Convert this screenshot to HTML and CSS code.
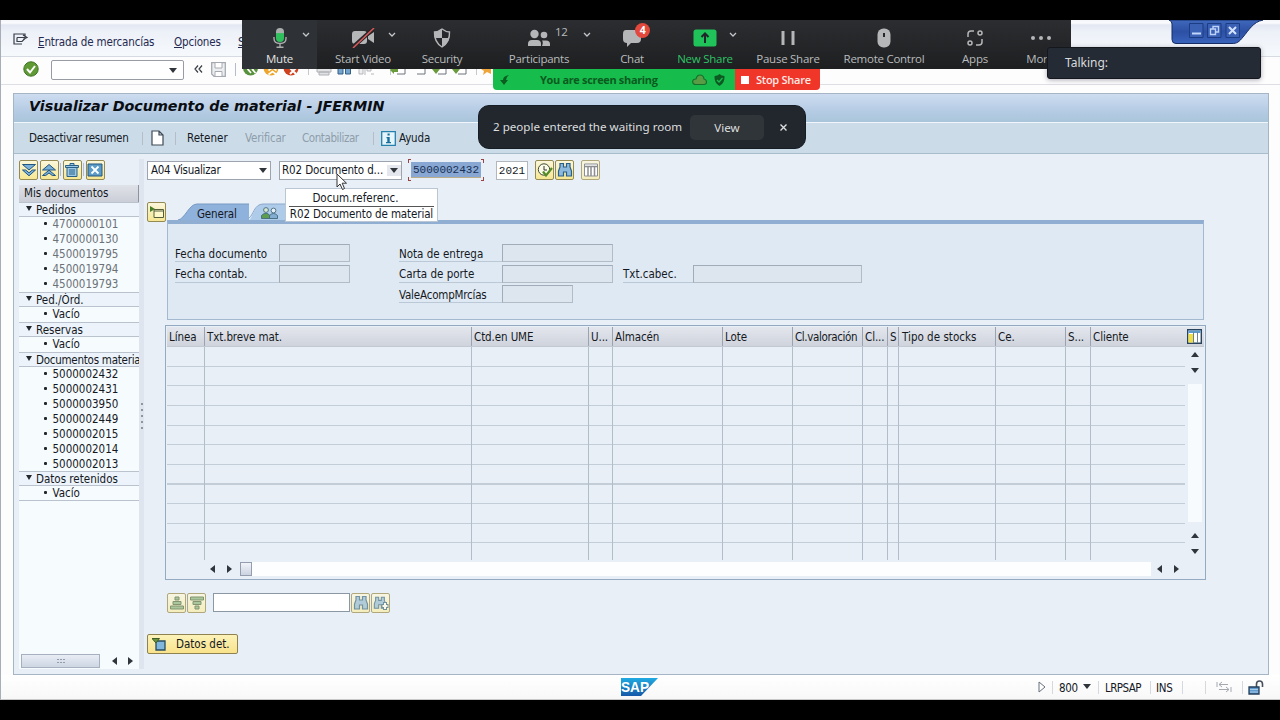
FILE: index.html
```html
<!DOCTYPE html>
<html lang="es">
<head>
<meta charset="utf-8">
<title>Visualizar Documento de material</title>
<link rel="stylesheet" href="styles.css">
</head>
<body>
<svg width="0" height="0" class="defs">
  <symbol id="bino" viewBox="0 0 16 16"><path d="M3 1.500h3.500V5h3V1.500H13V5l1.500 4v5H9.500v-4h-3v4h-5V9L3 5z" fill="#8db9dd" stroke="#2b5f86" stroke-width="1.200"/></symbol>
  <symbol id="chev" viewBox="0 0 8 5"><path d="M1 1l3 3 3-3" fill="none" stroke="#c4c6c8" stroke-width="1.300"/></symbol>
</svg>
<div class="window">
  <div class="menubar">
    <svg class="sysicon" width="16" height="12" viewBox="0 0 16 12"><path d="M12 3V1H1v10h8M4 4.500h8M4 4.500v4h5l4-4 M10 2l4 2.500-4 2" fill="none" stroke="#38404a" stroke-width="1.200"/></svg>
    <span class="menu m1"><u>E</u>ntrada de mercancías</span>
    <span class="menu m2"><u>O</u>pciones</span>
    <span class="menu"><u>S</u>istema</span>
  </div>
  <div class="toolbar">
    <svg class="ok" width="16" height="16" viewBox="0 0 16 16"><circle cx="8" cy="8" r="7.200" fill="#5f9a35" stroke="#3f7424"/><path d="M4 8l3 3.500L12 5" fill="none" stroke="#fff" stroke-width="2"/></svg>
    <div class="command"><i class="tri-d"></i></div>
    <svg class="laquo" width="9" height="8" viewBox="0 0 9 8"><path d="M4 .5L1 4l3 3.500M8 .5L5 4l3 3.500" fill="none" stroke="#3a3f45" stroke-width="1.200"/></svg>
    <svg width="15" height="15" viewBox="0 0 15 15"><path d="M.7.7h13.600v13.600H3L.7 12z" fill="#eceef0" stroke="#a6aab0" stroke-width="1.300"/><path d="M4 1v5h7V1M4 14V9.500h7V14" fill="#fff" stroke="#a6aab0"/></svg>
    <i class="sep s1"></i>
    <svg class="nav" width="260" height="16" viewBox="0 0 260 16">
      <circle cx="7.500" cy="7" r="7.500" fill="#58913b"/><path d="M8 5L5 8.500 8 12M12.500 5l-3 3.500 3 3.500" fill="none" stroke="#fff" stroke-width="1.700"/>
      <circle cx="28" cy="7" r="7.500" fill="#eda52c"/><path d="M25.500 9.500l4-3 4 3M25.500 13.500l4-3 4 3" fill="none" stroke="#fff" stroke-width="1.600"/>
      <circle cx="48" cy="7" r="7.500" fill="#cf421f"/><path d="M47 7l6 6M53 7l-6 6" stroke="#fff" stroke-width="2"/>
      <path d="M65.500 1v13" stroke="#c6c9cd"/>
      <path d="M74 6h14v5H74zM76 11h10v3H76z" fill="#dfe1e3" stroke="#aeb1b5"/>
      <path d="M95 2h5v11h-5zM102.500 2h5v11h-5zM100 6h3" fill="#74a5ce" stroke="#365f85"/>
      <path d="M116 2h4v11h-4zM124 2h4v8h-4zM122 8v6M128 13h3" fill="#eee" stroke="#b4b7bb"/>
      <path d="M147.500 1v13" stroke="#c6c9cd"/>
      <path d="M153 2h9v11h-8M173 2h9v11h-8M194 2h9v11h-8M214 2h9v11h-8" fill="#fff" stroke="#6d737a"/>
      <path d="M147 9l4-4v2h4v4h-4v2zM169 5h5v3h-5zM189 8h2V3h4v5h2l-4 5zM209 8h2V3h4v5h2l-4 5z" fill="#699b3d"/>
      <path d="M233.500 1v13" stroke="#c6c9cd"/>
      <path d="M240 4l2 2 3-3v4h3v6l-4-2-4 3 1-4-3-2h3z" fill="#f0a53a"/>
    </svg>
  </div>
  <div class="sheet">
    <h1 class="title">Visualizar Documento de material - JFERMIN</h1>
    <div class="appbar">
      <span class="a1">Desactivar resumen</span><i class="sep"></i>
      <svg class="page" width="13" height="16" viewBox="0 0 13 16"><path d="M1 1h7l4 4v10H1zM8 1v4h4" fill="#fff" stroke="#3e4a55" stroke-width="1.200"/></svg><i class="sep"></i>
      <span class="a2">Retener</span><span class="a3 off">Verificar</span><span class="a4 off">Contabilizar</span><i class="sep"></i>
      <svg class="info" width="15" height="15" viewBox="0 0 15 15"><path d="M.7.7h13.600v13.600H.7z" fill="#e6f5fb" stroke="#2581ac" stroke-width="1.300"/><path d="M6.500 2.500h2.200v2H6.500zM5.500 6h3.200v5H10v1.300H5V11h1.300V7.300h-.8z" fill="#176f9c"/></svg>
      <span class="a5">Ayuda</span>
    </div>
    <div class="content">
      <aside class="side">
        <div class="sidebtns">
          <b class="ybtn"><svg viewBox="0 0 16 16"><path d="M1.500 2.500h13L8 8zM1.500 8h3.200L8 10.800 11.300 8h3.200L8 13.800z" fill="#78b0da" stroke="#23567e"/></svg></b>
          <b class="ybtn"><svg viewBox="0 0 16 16"><path d="M1.500 8L8 2.500 14.500 8zM1.500 13.500L8 8.200l6.500 5.300h-3.200L8 11l-3.300 2.500z" fill="#78b0da" stroke="#23567e"/></svg></b>
          <i class="sep"></i>
          <b class="ybtn"><svg viewBox="0 0 16 16"><path d="M1.500 3.500h13v2h-13zM6 3V1.500h4V3M3 5.500h10v9H3zM6 7v6M8 7v6M10 7v6" fill="#9cc8e6" stroke="#286089"/></svg></b>
          <i class="sep"></i>
          <b class="ybtn"><svg viewBox="0 0 16 16"><path d="M1 2h14v12H1z" fill="#5d9cc9" stroke="#23567e"/><path d="M4.500 4.500l7 7M11.500 4.500l-7 7" stroke="#fff" stroke-width="1.800"/></svg></b>
        </div>
        <div class="treehead">Mis documentos</div>
        <div class="tree">
          <div class="node">Pedidos</div>
          <div class="leaf off2">4700000101</div><div class="leaf off2">4700000130</div><div class="leaf off2">4500019795</div><div class="leaf off2">4500019794</div><div class="leaf off2">4500019793</div>
          <div class="node">Ped./Órd.</div>
          <div class="leaf">Vacío</div>
          <div class="node">Reservas</div>
          <div class="leaf">Vacío</div>
          <div class="node tight">Documentos materia</div>
          <div class="leaf">5000002432</div><div class="leaf">5000002431</div><div class="leaf">5000003950</div><div class="leaf">5000002449</div><div class="leaf">5000002015</div><div class="leaf">5000002014</div><div class="leaf">5000002013</div>
          <div class="node">Datos retenidos</div>
          <div class="leaf last">Vacío</div>
        </div>
        <div class="sidescroll"><span class="thumb"><i></i><i></i><i></i><i></i><i></i><i></i></span><i class="tri-l"></i><i class="tri-r"></i></div>
      </aside>
      <div class="splitter"><i></i><i></i><i></i><i></i><i></i></div>
      <main class="main">
        <div class="query">
          <div class="combo">A04 Visualizar<i class="tri-d"></i></div>
          <div class="combo c2">R02 Documento d...<i class="tri-d"></i></div>
          <div class="focus"><span>5000002432</span></div>
          <div class="year">2021</div>
          <b class="ybtn"><svg viewBox="0 0 16 16"><circle cx="7" cy="7.500" r="5.700" fill="#fbfbe8" stroke="#3d4b34"/><path d="M7 4v4h3" fill="none" stroke="#333"/><path d="M6 9.500l3 4L15 6" fill="none" stroke="#568c28" stroke-width="2.200"/></svg></b>
          <b class="ybtn"><svg><use href="#bino"/></svg></b>
          <b class="ybtn dim cols"><svg viewBox="0 0 16 16"><path d="M1.500 2h13v12h-13z" fill="#fff" stroke="#8b8d90"/><path d="M1.500 4.500h13M5 4.500V14M8 4.500V14M11.500 4.500V14" fill="none" stroke="#8b8d90" stroke-width="1.500"/></svg></b>
        </div>
        <div class="tabs">
          <b class="ybtn"><svg viewBox="0 0 16 16"><path d="M5 5.500h9.500v8H5z" fill="#fff8c8" stroke="#555e3c"/><path d="M5 7h9" stroke="#555e3c"/><path d="M1 2l5 3-5 3z" fill="#477e28"/></svg></b>
          <svg class="tabshape" width="120" height="17" viewBox="0 0 120 17">
            <path d="M0 17C7 16 11 1 19 1h52v16z" fill="#8fb2dc"/><path d="M0 17C7 16 11 1 19 1h52" fill="none" stroke="#7899c2"/>
            <path d="M71 17C75 15 76 1 85 1h35v16z" fill="#afcbea"/><path d="M71 15C75 13 76 1 85 1h35" fill="none" stroke="#8ba9cc"/>
            <g stroke="#436a7b" stroke-width=".9"><circle cx="88" cy="7" r="2.400" fill="#d8e9d0"/><path d="M83.500 15.500v-3q4.500-4.500 8.500 0v3z" fill="#5d9e4e"/><circle cx="95.500" cy="7.500" r="2.400" fill="#e5edf5"/><path d="M91.500 15.500v-3q4-4 8 0v3z" fill="#83add2"/></g>
          </svg>
          <span class="tabname">General</span>
        </div>
        <section class="form">
          <label>Fecha documento</label><span class="fld"></span><label class="g2">Nota de entrega</label><span class="fld w2"></span><em></em><em></em>
          <label>Fecha contab.</label><span class="fld"></span><label class="g2">Carta de porte</label><span class="fld w2"></span><label class="g3">Txt.cabec.</label><span class="fld"></span>
          <em></em><em></em><label class="g2 vale">ValeAcompMrcías</label><span class="fld w3"></span>
        </section>
        <section class="grid">
          <div class="cols-row head"><span>Línea</span><span>Txt.breve mat.</span><span>Ctd.en UME</span><span>U...</span><span>Almacén</span><span>Lote</span><span class="tight">Cl.valoración</span><span>Cl...</span><span>S</span><span class="wide">Tipo de stocks</span><span>Ce.</span><span>S...</span><span>Cliente</span>
            <svg width="15" height="15" viewBox="0 0 15 15"><path d="M.7.7h13.600v13.600H.7z" fill="#fff" stroke="#28435e" stroke-width="1.400"/><path d="M1.500 1.500h12v2.500h-12z" fill="#5b9ccd"/><path d="M1.500 5h4.500v8.500H1.500z" fill="#f0de45"/><path d="M6.500 3v11M10.500 3v11" stroke="#6d8294"/></svg>
          </div>
          <div class="body">
            <div class="cols-row cells"><i></i><i></i><i></i><i></i><i></i><i></i><i></i><i></i><i></i><i></i><i></i><i></i><i></i></div>
            <div class="vscroll"><i class="tri-u"></i><i class="tri-d"></i><b></b><i class="tri-u"></i><i class="tri-d"></i></div>
          </div>
          <div class="hscroll"><i class="tri-l"></i><i class="tri-r"></i><b></b><s></s><i class="tri-l"></i><i class="tri-r"></i></div>
        </section>
        <div class="find">
          <b class="ybtn dim"><svg viewBox="0 0 16 16"><path d="M6 2h4v3H6zM4 6.500h8v3H4zM1.500 11h13v3h-13z" fill="#a9c79a" stroke="#839572"/></svg></b>
          <b class="ybtn dim"><svg viewBox="0 0 16 16"><path d="M1.500 2h13v3h-13zM4 6.500h8v3H4zM6 11h4v3H6z" fill="#a9c79a" stroke="#839572"/></svg></b>
          <span class="search"></span>
          <b class="ybtn dim"><svg opacity=".65"><use href="#bino"/></svg></b>
          <b class="ybtn dim"><svg opacity=".65" viewBox="0 0 16 16"><use href="#bino" width="14" height="16"/><path d="M12 7v8M8.500 11h7" stroke="#2b5f86" stroke-width="4"/><path d="M12 8v6M9.500 11h5" stroke="#fff" stroke-width="2"/></svg></b>
        </div>
        <div class="detail"><svg width="14" height="13" viewBox="0 0 14 13"><path d="M4 3h9v9H4z" fill="#81b7dc" stroke="#294c60" stroke-width="1.300"/><path d="M0 .5h7.500L4 5z" fill="#68953c" stroke="#3f5c29"/></svg>Datos det.</div>
      </main>
    </div>
  </div>
  <footer class="status">
    <svg class="sap" width="38" height="18" viewBox="0 0 38 18"><defs><linearGradient id="sg" x2="0" y2="1"><stop stop-color="#20abe2"/><stop offset="1" stop-color="#1559a8"/></linearGradient></defs><path d="M0 0h37L20 18H0z" fill="url(#sg)"/><text x="0" y="14" class="saptext" textLength="28" lengthAdjust="spacingAndGlyphs">SAP</text></svg>
    <svg class="play" width="8" height="12" viewBox="0 0 8 12"><path d="M1 1v10l6-5z" fill="#fff" stroke="#66707c"/></svg>
    <i class="sep"></i><span class="st1">800<i class="tri-d"></i></span><i class="sep"></i><span class="st2">LRPSAP</span><i class="sep"></i><span class="st3">INS</span><i class="sep"></i><i class="sep e"></i>
    <svg class="tr" width="16" height="12" viewBox="0 0 16 12"><path d="M1 1v5M3 3.500h9M6 1L3 3.500 6 6M15 6v5M3 8.500h10M10 6l3 2.500-3 2.500" fill="none" stroke="#a4a9af"/></svg><i class="sep"></i>
    <svg class="lock" width="16" height="15" viewBox="0 0 16 15"><path d="M8.500 7V4q0-3 3-3t3 3v3" fill="none" stroke="#47505a" stroke-width="1.600"/><path d="M1 7h10v7H1z" fill="#5f9ace" stroke="#243f5b" stroke-width="1.300"/><path d="M2 9.500h8M2 12h8" stroke="#a7cbe9"/></svg>
  </footer>
</div>

<div class="popup"><div>Docum.referenc.</div><div>R02 Documento de material</div></div>
<svg class="cursor" width="12" height="18" viewBox="0 0 12 18"><path d="M1 1v13l3-3 2.500 5.500 2-1L6.200 10.200H10.500z" fill="#fff" stroke="#333"/></svg>

<svg class="winctl" width="96" height="25" viewBox="0 0 96 25"><defs><linearGradient id="wg" x2="0" y2="1"><stop stop-color="#3f68bb"/><stop offset=".5" stop-color="#2c50a4"/><stop offset="1" stop-color="#3a64bd"/></linearGradient></defs><path d="M2 0h94c-10 2-14 10-20 17-4 5-6 6.500-11 6.500H9q-4 0-4-4V4q0-3-3-4z" fill="url(#wg)" stroke="#152c66"/><path d="M22.500 3.500h13.500v14H22.500zM40.500 3.500h13.500v14H40.500zM59 3.500h13.500v14H59z" fill="#3b61b4" stroke="#1c3c83"/><path d="M25 13.500h9" stroke="#c3d6fb" stroke-width="2"/><path d="M43.500 9h5v5.500h-5zM46 8.500V6.500h5.500v5.500h-2.500" fill="none" stroke="#bdd1f8" stroke-width="1.400"/><path d="M62 7l7 7M69 7l-7 7" stroke="#d5e2fd" stroke-width="2"/></svg>

<div class="zoombar">
  <div class="z mute"><svg width="16" height="20" viewBox="0 0 16 20"><defs><linearGradient id="mg" x2="0" y2="1"><stop offset=".35" stop-color="#a9adab"/><stop offset=".4" stop-color="#2fbf5c"/></linearGradient></defs><rect x="4" y="0" width="8" height="14" rx="4" fill="url(#mg)"/><path d="M2 9v1.500q0 5 6 5t6-5V9M8 15.500v4M4.500 19.300h7" fill="none" stroke="#a9adab" stroke-width="1.400"/></svg><span>Mute</span><svg class="chev"><use href="#chev"/></svg></div>
  <div class="z video"><svg width="24" height="20" viewBox="0 0 24 20"><path d="M1 6q0-3 3-3h9q3 0 3 3v7q0 3-3 3H4q-3 0-3-3zM17 8l6-4v11l-6-4z" fill="#b4b6b7"/><path d="M2 19L22 1" stroke="#242628" stroke-width="4"/><path d="M2 20L23 0" stroke="#d9585b" stroke-width="1.500"/></svg><span>Start Video</span><svg class="chev"><use href="#chev"/></svg></div>
  <div class="z sec"><svg width="18" height="20" viewBox="0 0 18 20"><path d="M9 1q4 3 7.500 3Q17 14 9 19 1 14 1.500 4 5 4 9 1z" fill="none" stroke="#b4b6b7" stroke-width="1.400"/><path d="M9 1v9h7q-1 6-7 9v-9H2Q1 7 1.500 4 5 4 9 1z" fill="#b4b6b7"/></svg><span>Security</span></div>
  <div class="z part"><svg width="24" height="20" viewBox="0 0 24 20"><g fill="#b4b6b7"><circle cx="7.500" cy="6" r="4.200"/><path d="M1 18v-2q0-4 4-4h5q4 0 4 4v2z"/><circle cx="17" cy="7" r="3.300"/><path d="M15 18h8v-2q0-3.500-4-3.500h-4q1.500 2 0 5.500z"/></g></svg><span>Participants</span><small>12</small><svg class="chev"><use href="#chev"/></svg></div>
  <div class="z chat"><svg width="20" height="20" viewBox="0 0 20 20"><path d="M4 2h11q4 0 4 4v5q0 4-4 4H9l-4 4v-4q-4 0-4-4V6q0-4 3-4z" fill="#b4b6b7"/></svg><span>Chat</span><b class="badge">4</b></div>
  <div class="z share"><svg width="24" height="20" viewBox="0 0 24 20"><rect x=".5" y="1.500" width="23" height="17" rx="2.500" fill="#1fc35a"/><path d="M12 15V6M8.500 9L12 5.500 15.500 9" fill="none" stroke="#20262a" stroke-width="2"/></svg><span>New Share</span><svg class="chev"><use href="#chev"/></svg></div>
  <div class="z pause"><svg width="14" height="20" viewBox="0 0 14 20"><path d="M2 3v14M12 3v14" stroke="#b4b6b7" stroke-width="3"/></svg><span>Pause Share</span></div>
  <div class="z remote"><svg width="14" height="20" viewBox="0 0 14 20"><rect x=".5" y=".5" width="13" height="19" rx="6" fill="#b4b6b7"/><path d="M7 5v4" stroke="#242628" stroke-width="2"/></svg><span>Remote Control</span></div>
  <div class="z apps"><svg width="18" height="18" viewBox="0 0 18 18"><g fill="none" stroke="#b4b6b7" stroke-width="1.500"><path d="M2 8V5q0-3 3-3h3M16 10v3q0 3-3 3h-3"/><circle cx="14" cy="4" r="2"/><circle cx="4" cy="14" r="2"/></g></svg><span>Apps</span></div>
  <div class="z more"><svg width="22" height="20" viewBox="0 0 22 20"><g fill="#b4b6b7"><circle cx="4" cy="10" r="2"/><circle cx="12" cy="10" r="2"/><circle cx="20" cy="10" r="2"/></g></svg><span>More</span></div>
</div>
<div class="sharing"><div class="green"><svg width="9" height="10" viewBox="0 0 9 10"><path d="M9 0Q3 1 3 5H0l4 5 4-5H6q0-3 3-5z" fill="#0b5d20"/></svg><span>You are screen sharing</span><svg width="15" height="12" viewBox="0 0 15 12"><path d="M4 10.500q-3.300 0-3.300-2.800T4 5q1-4 4-4 3.500 0 4 4 2.500.5 2.500 3T12 10.500z" fill="#5a9c45" stroke="#14702b" stroke-width="1.200"/></svg><svg class="shield" width="11" height="12" viewBox="0 0 11 12"><path d="M5.500 0q2 2 5 2 .5 7-5 10-5.500-3-5-10 3 0 5-2z" fill="#0c5a22"/><path d="M3 6l2 2 3.500-4" fill="none" stroke="#18bd4e" stroke-width="1.200"/></svg></div><div class="red"><i></i><span>Stop Share</span></div></div>
<div class="toast"><span class="msg">2 people entered the waiting room</span><span class="view">View</span><svg width="9" height="9" viewBox="0 0 9 9"><path d="M1.500 1.500l6 6M7.500 1.500l-6 6" stroke="#dcdedf" stroke-width="1.400"/></svg></div>
<div class="talking">Talking:</div>
</body>
</html>
```
FILE: styles.css
```css
* { box-sizing: border-box; }
body { margin: 0; width: 1280px; height: 720px; background: #000; padding: 20px 0; overflow: hidden; position: relative; font: 11.5px/15px "DejaVu Sans Condensed", "DejaVu Sans", sans-serif; font-stretch: condensed; color: #15191f; white-space: nowrap; }
svg { display: block; flex: none; }
i, em, s { font-style: normal; text-decoration: none; flex: none; }
.defs { position: absolute; }
.window { height: 680px; background: #fdfdfe; border-left: 1px solid #a9adb8; border-bottom: 1px solid #c8c8c8; display: flex; flex-direction: column; overflow: hidden; }
.menubar { height: 37px; flex: none; display: flex; align-items: center; padding: 8px 0 0 12px; background: linear-gradient(#f4f5fa 0, #fafbfd 3px, #e3e7f2 5px, #edf1f8 12px, #f6f9fc 36px); border-bottom: 1px solid #d6dae2; color: #252a50; }
.sysicon { margin: -7px 9px 0 0; }
.menu { font-size: 11.5px; }
.m1 { width: 136px; letter-spacing: -.15px; }
.m2 { width: 64px; letter-spacing: -.15px; }
.toolbar { height: 28px; flex: none; display: flex; align-items: center; padding: 0 0 3px 22px; border-bottom: 1px solid #dddfe5; }
.command { width: 133px; height: 20px; margin: 1px 10px 0 12px; border: 1px solid #989ba3; border-radius: 2px; background: #fff; padding: 7px 6px; display: flex; justify-content: flex-end; }
.tri-d, .tri-u { width: 0; height: 0; border: 4px solid transparent; border-top: 5px solid #30353b; border-bottom: 0; }
.tri-u { border-top: 0; border-bottom: 5px solid #30353b; }
.tri-l, .tri-r { width: 0; height: 0; border: 4px solid transparent; border-right: 5px solid #30353b; border-left: 0; }
.tri-r { border-right: 0; border-left: 5px solid #30353b; }
.laquo { margin-right: 8px; }
.sep { width: 1px; height: 13px; background: #b5bdc8; display: block; }
.s1 { margin: 0 7px 0 9px; }
.sheet { margin: 8px 11px 0 12px; height: 582px; flex: none; border: 1px solid #a6b5c6; background: #e8eff7; display: flex; flex-direction: column; overflow: hidden; }
.title { margin: 0; height: 29px; flex: none; padding: 4px 0 0 15px; background: linear-gradient(#cddcf0, #b5cce4 60%, #a9c5da); border-bottom: 1px solid #f0f6fb; color: #0a0d12; font: italic bold 14.3px/16px "DejaVu Sans", sans-serif; font-stretch: normal; letter-spacing: -.02px; }
.appbar { height: 31px; flex: none; display: flex; align-items: center; background: #cbdce8; border-bottom: 1px solid #a9bccb; padding-left: 15px; }
.a1 { width: 113px; letter-spacing: -.25px; } .page { margin: 0 11px 0 8px; } .a2 { width: 58px; margin-left: 11px; } .a3 { width: 57px; letter-spacing: -.2px; } .a4 { width: 71px; letter-spacing: -.42px; } .a5 { letter-spacing: -.15px; }
.off { color: #8f9dab; }
.info { margin: 0 3px 0 7px; }
.content { flex: 1; display: flex; padding: 5px 0 5px 5px; }
.side { width: 120px; display: flex; flex-direction: column; overflow: hidden; }
.sidebtns { height: 26px; display: flex; gap: 1.5px; padding-bottom: 5px; flex: none; align-items: center; }
.ybtn { width: 19px; height: 20px; flex: none; border: 1px solid #958a51; border-radius: 2px; background: linear-gradient(#fbf7da, #f7e793); display: flex; align-items: center; justify-content: center; }
.ybtn svg { width: 16px; height: 16px; }
.dim { border-color: #b0a87c; background: linear-gradient(#f7f5e2, #f4edbd); }
.treehead { height: 17px; flex: none; background: linear-gradient(#dfe2e8, #cbced6); border-right: 1px solid #8e949e; padding: 1px 0 0 5px; }
.tree { flex: 1; background: #f6fbfe; }
.node, .leaf { height: 14.98px; line-height: 15px; overflow: hidden; }
.node { padding-left: 17px; border-bottom: 1px solid #bac3cd; border-top: 1px solid #bac3cd; line-height: 14px; background: #ecf3fa; position: relative; }
.node.tight { letter-spacing: -.25px; overflow: visible; }
.node::before { content: ""; position: absolute; left: 7px; top: 3px; border: 3.500px solid transparent; border-top: 5px solid #22272c; border-bottom: 0; }
.leaf { padding-left: 25px; display: flex; align-items: center; padding-top: 1px; }
.leaf::before { content: ""; width: 3px; height: 3px; border-radius: 1px; background: #22272c; margin: -2px 5.500px 0 0; flex: none; }
.off2 { color: #6b7177; }
.last { border-bottom: 1px solid #bac3cd; }
.sidescroll { height: 17px; flex: none; display: flex; align-items: center; padding-left: 2px; background: #f6fbfe; }
.thumb { width: 79px; height: 14px; border: 1px solid #a6b0be; background: linear-gradient(#e9edf5, #cdd6e3); display: grid; grid-template-columns: repeat(3, 2px); gap: 2px 1px; place-content: center; }
.thumb i { background: #929cab; height: 1px; }
.sidescroll .tri-l { margin: 0 11px 0 12px; }
.splitter { width: 5px; margin-right: 3px; background: #dfe5ef; display: flex; flex-direction: column; gap: 4px; padding-top: 244px; align-items: center; }
.splitter i { width: 2px; height: 2px; background: #8e95a0; }
.main { width: 1060px; display: flex; flex-direction: column; }
.query { display: flex; height: 22px; align-items: center; flex: none; }
.combo { width: 124px; height: 19px; border: 1px solid #9da4ad; background: #fff; display: flex; align-items: center; justify-content: space-between; padding: 0 3px; letter-spacing: -.28px; }
.c2 { width: 123px; margin: 0 6px 0 8px; letter-spacing: -.12px; padding-left: 2px; }
.c2 .tri-d { outline: 3px solid #e4e8ee; background: #e4e8ee; }
.focus { width: 76px; height: 22px; padding: 3px 3px; background: linear-gradient(90deg, #944 3px, transparent 3px 73px, #944 73px) 0 0/100% 1px no-repeat, linear-gradient(90deg, #944 3px, transparent 3px 73px, #944 73px) 0 100%/100% 1px no-repeat, linear-gradient(#944 4px, transparent 4px 18px, #944 18px) 0 0/1px 100% no-repeat, linear-gradient(#944 4px, transparent 4px 18px, #944 18px) 100% 0/1px 100% no-repeat; }
.focus span { display: block; height: 16px; background: #88a8d3; text-align: center; font: 11px/17px "Liberation Mono", monospace; color: #183055; border-bottom: 1px solid #bcae8a; }
.year { width: 32px; height: 19px; margin: 0 7px 0 12px; background: #fff; border: 1px solid #b2b7be; text-align: center; font: 11px/18px "Liberation Mono", monospace; }
.query .ybtn + .ybtn { margin-left: 1px; }
.query .cols { margin-left: 7px !important; }
.tabs { height: 39px; flex: none; display: flex; align-items: flex-end; position: relative; padding-bottom: 0; }
.tabs .ybtn { height: 20px; align-self: center; margin-top: 22px; }
.tabshape { margin-left: 12px; }
.tabname { position: absolute; left: 50px; bottom: -2px; font-size: 11.5px; letter-spacing: -.15px; }
.form { margin-left: 20px; width: 1037px; height: 100px; flex: none; border: 1px solid #a3b9cf; border-top: 4px solid #8faed2; background: #dfe9f3; display: grid; grid-template-columns: 104px 120px 103px 121px 70px 169px; grid-auto-rows: 18px; row-gap: 2.500px; padding: 20px 0 0 7px; }
.form label { border-bottom: 1px solid #bbc9d7; padding-top: 2.500px; }
.form .vale { letter-spacing: -.2px; }
.fld { border: 1px solid #a0acb9; border-right-color: #b2bcc7; border-bottom-color: #b2bcc7; width: 71px; background: #dde6ef; }
.w2 { width: 111px; }
.form .fld:last-of-type { width: 71px; }
.form .g3 + .fld { width: 169px; }
.grid { margin: 5px 0 0 18px; width: 1041px; height: 255px; flex: none; border: 1px solid #93aac1; padding: 1px; display: flex; flex-direction: column; }
.cols-row { display: grid; grid-template-columns: 38px 267px 117px 24px 110px 70px 70px 25px 11px 97px 70px 25px 94px; }
.head { height: 20px; flex: none; grid-template-columns: 38px 267px 117px 24px 110px 70px 70px 25px 11px 97px 70px 25px 96px 17px; background: linear-gradient(#e3e6ed, #cfd3dc); border-bottom: 1px solid #c3c9d2; align-items: center; }
.head span { border-right: 1px solid #9aa3af; padding-left: 2px; height: 19px; line-height: 20px; overflow: hidden; letter-spacing: -.1px; }
.head .tight { letter-spacing: -.38px; }
.head .wide { padding-left: 3px; letter-spacing: .02px; }
.head span:nth-of-type(13) { border: 0; }
.body { display: flex; height: 213px; }
.cells { height: 213px; background: repeating-linear-gradient(transparent 0 18.600px, #c2cdd8 18.600px 19.650px); }
.cells i { border-right: 1px solid #b1bdc9; }
.cells i:last-child { border: 0; }
.vscroll { width: 18px; margin-left: 1px; display: flex; flex-direction: column; align-items: center; gap: 11px; padding: 5px 0 6px; }
.vscroll b { width: 14px; flex: 1; background: #f7fbfe; }
.hscroll { height: 18px; display: flex; align-items: center; padding-left: 43px; }
.hscroll .tri-r { margin-left: 12px; }
.hscroll b { width: 12px; height: 14px; margin-left: 8px; border: 1px solid #949dae; background: linear-gradient(#f2f4f9, #cbd3e1); }
.hscroll s { width: 899px; height: 14px; background: #fdfeff; margin-right: 6px; }
.find { height: 21px; flex: none; margin: 12px 0 0 20px; display: flex; gap: 1px; align-items: center; }
.search { width: 137px; height: 19px; background: #fff; border: 1px solid #8b98a3; margin-left: 6px; }
.detail { width: 91px; height: 20px; margin-top: 21px; border: 1px solid #8e8350; border-radius: 2px; background: linear-gradient(#fcf3b9, #f9e28b); display: flex; align-items: center; gap: 10px; padding-left: 4px; }
.status { height: 26px; display: flex; align-items: center; font-size: 11.5px; letter-spacing: -.3px; background: linear-gradient(#fff, #f8f8f9); }
.status .sep { background: #d5d8dd; }
.status span { padding-top: 2px; }
.saptext { font: bold 15px "Liberation Sans", sans-serif; fill: #fff; letter-spacing: 0; }
.sap { margin: 0 379px 0 620px; }
.play { margin-right: 6px; }
.st1 { width: 45px; padding-left: 6px; display: flex; align-items: center; gap: 5px; }
.status .tri-d { margin-top: -3px; }
.st2 { width: 51px; padding-left: 6px; letter-spacing: -.55px; }
.st3 { width: 31px; padding-left: 5px; }
.e { margin-left: 22px; } .tr { margin: 0 10px; } .lock { margin-left: 5px; }
.popup { position: absolute; left: 285px; top: 188px; width: 153px; height: 34px; border: 1px solid #bac6d4; background: #fff; padding: 1px 3px; text-align: center; letter-spacing: -.1px; }
.popup div { height: 16px; line-height: 16px; padding-right: 12px; letter-spacing: 0; }
.popup div + div { border-top: 1px solid #555; padding: 0; letter-spacing: -.12px; line-height: 15px; }
.cursor { position: absolute; left: 336px; top: 173px; }
.winctl { position: absolute; left: 1167px; top: 20px; }
.zoombar { position: absolute; left: 242px; top: 20px; width: 829px; height: 49px; background: linear-gradient(#2b2d30, #1d1f21); display: flex; font: 11.5px/16px "Open Sans", "Noto Sans", sans-serif; letter-spacing: -.26px; color: #b9bbbc; }
.z { display: flex; flex-direction: column; align-items: center; position: relative; padding-top: 8px; gap: 3px; }
.z > svg:first-child { height: 20px; }
.z .chev { position: absolute; top: 12px; right: 7px; width: 8px; height: 5px; }
.mute { width: 75px; background: #2e3135; color: #e2e3e4; } .video { width: 92px; } .video .chev { right: 13px; } .sec { width: 66px; } .part { width: 128px; } .part .chev { right: 12px; } .chat { width: 58px; } .share { width: 88px; color: #2fc466; } .share .chev { right: 12px; } .pause { width: 78px; } .remote { width: 114px; } .apps { width: 68px; } .more { width: 62px; }
.part small { position: absolute; left: 80px; top: 4px; font-size: 11.5px; }
.badge { position: absolute; left: 32px; top: 3px; width: 15px; height: 15px; border-radius: 50%; background: #e2483c; color: #fff; font-size: 10.5px; line-height: 15px; text-align: center; }
.sharing { position: absolute; left: 493px; top: 69px; width: 327px; height: 21px; display: flex; border-radius: 0 0 4px 4px; overflow: hidden; font: 700 11px/20px "Open Sans", sans-serif; }
.green { width: 242px; background: #16bd4d; color: #0b5a1e; display: flex; align-items: center; padding-left: 7px; }
.green span { padding-left: 31px; box-sizing: content-box; width: 121px; margin-right: 31px; letter-spacing: -.34px; }
.shield { margin-left: 7px; }
.red { width: 85px; background: #ef3629; color: #ffe9e5; display: flex; align-items: center; gap: 7px; padding-left: 6px; font-weight: 600; letter-spacing: -.25px; }
.red i { width: 8px; height: 8px; background: #fff; }
.toast { position: absolute; left: 478px; top: 105px; width: 328px; height: 44px; border: 1px solid #171d25; border-radius: 11px; background: #22272e; color: #dcdedf; display: flex; align-items: center; padding-left: 14px; font: 11.6px/16px "Noto Sans", sans-serif; }
.msg { width: 197px; }
.view { width: 74px; height: 25px; border-radius: 5px; background: #303539; text-align: center; line-height: 25px; margin-right: 15px; }
.talking { position: absolute; left: 1047px; top: 47px; width: 214px; height: 32px; background: #252b35; border: 1px solid #14171c; border-radius: 3px; color: #d8dadd; padding-left: 17px; font: 12px/30px "Noto Sans", sans-serif; box-shadow: 0 1px 5px rgba(50, 50, 70, .4); }
```
